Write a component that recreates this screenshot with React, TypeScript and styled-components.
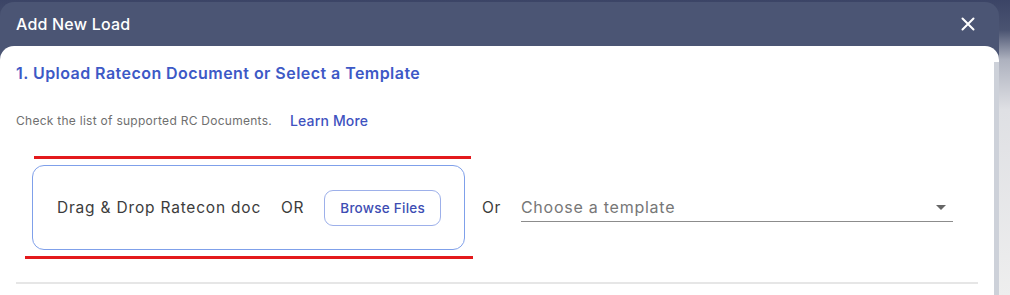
import styled, { createGlobalStyle } from "styled-components";

const GlobalStyle = createGlobalStyle`
  html, body {
    margin: 0;
    padding: 0;
  }
  body {
    font-family: "Inter", "Open Sans", sans-serif;
  }
`;

const Page = styled.div`
  width: 1010px;
  height: 295px;
  overflow: hidden;
  display: flex;
  flex-direction: row;
  background: linear-gradient(
    180deg,
    #3b4466 0px,
    #4a5371 30px,
    #aeb2bf 60px,
    #dfe0e4 110px,
    #eeeeee 295px
  );
`;

const Modal = styled.div`
  width: 999px;
  margin-top: 2px;
  display: flex;
  flex-direction: column;
  background: #4b5574;
  border-radius: 14px 14px 0 0;
`;

const Header = styled.div`
  height: 44px;
  padding: 0 24px 0 16px;
  display: flex;
  align-items: center;
  justify-content: space-between;
  color: #ffffff;

  h2 {
    margin: 0;
    font-size: 16px;
    font-weight: 500;
    letter-spacing: 0.2px;
  }
`;

const CloseButton = styled.button`
  background: none;
  border: none;
  padding: 0;
  width: 14px;
  height: 14px;
  display: flex;
  cursor: pointer;
`;

const Body = styled.div`
  flex: 1;
  display: flex;
  flex-direction: row;
  background: #ffffff;
  border-radius: 14px 14px 0 0;
`;

const Content = styled.div`
  flex: 1;
  padding: 17px 16px 0 16px;
  display: flex;
  flex-direction: column;
`;

const ScrollTrack = styled.div`
  width: 5px;
  margin-top: 16px;
  background: #cdd1d9;
`;

const SectionTitle = styled.h3`
  margin: 0;
  font-size: 16px;
  line-height: 20px;
  font-weight: 600;
  letter-spacing: 0.45px;
  color: #3d59c6;
`;

const HintRow = styled.div`
  margin-top: 27px;
  display: flex;
  align-items: center;
  gap: 18px;
  height: 20px;
`;

const Hint = styled.span`
  font-size: 12px;
  letter-spacing: 0.27px;
  color: #6f6f6f;
`;

const LearnMore = styled.a`
  font-size: 14px;
  font-weight: 500;
  letter-spacing: 0.15px;
  color: #3f52c0;
  text-decoration: none;
  cursor: pointer;
`;

const UploadRow = styled.div`
  margin-top: 26px;
  display: flex;
  flex-direction: row;
  align-items: center;
`;

const Highlight = styled.div`
  display: flex;
  flex-direction: column;
  width: 457px;
`;

const RedMark = styled.div<{ $left: number; $width: number }>`
  height: 3px;
  margin-left: ${(p) => p.$left}px;
  width: ${(p) => p.$width}px;
  background: #e3191c;
`;

const DropZone = styled.div`
  margin: 6px 0 6px 16px;
  width: 433px;
  height: 85px;
  box-sizing: border-box;
  border: 1px solid #7fa0ea;
  border-radius: 12px;
  display: flex;
  align-items: center;
  padding-left: 24px;
  color: #3c3c3c;
  font-size: 15.5px;
  letter-spacing: 0.8px;
`;

const OrText = styled.span<{ $left: number; $right: number }>`
  margin: 0 ${(p) => p.$right}px 0 ${(p) => p.$left}px;
  font-size: 15.5px;
  letter-spacing: 0.6px;
  color: #3c3c3c;
`;

const BrowseButton = styled.button`
  width: 117px;
  height: 36px;
  border: 1px solid #9db0ea;
  border-radius: 9px;
  background: #ffffff;
  color: #3d4db3;
  font-family: inherit;
  font-size: 13.5px;
  font-weight: 500;
  letter-spacing: 0.25px;
  cursor: pointer;
`;

const Select = styled.div`
  width: 432px;
  height: 29px;
  box-sizing: border-box;
  border-bottom: 1px solid #8c8c8c;
  display: flex;
  align-items: center;
  justify-content: space-between;
  padding: 0 7px 0 0;
  font-size: 16px;
  letter-spacing: 0.75px;
  color: #777777;
`;

const Caret = styled.span`
  width: 0;
  height: 0;
  border-left: 5px solid transparent;
  border-right: 5px solid transparent;
  border-top: 5px solid #666666;
`;

const Divider = styled.div`
  margin-top: 23px;
  height: 2px;
  background: #e6e6e6;
`;

export default function App() {
  return (
    <Page>
      <GlobalStyle />
      <Modal>
        <Header>
          <h2>Add New Load</h2>
          <CloseButton aria-label="close">
            <svg width="14" height="14" viewBox="0 0 14 14">
              <path
                d="M1.5 1.5 L12.5 12.5 M12.5 1.5 L1.5 12.5"
                stroke="#ffffff"
                strokeWidth="2"
                strokeLinecap="round"
              />
            </svg>
          </CloseButton>
        </Header>
        <Body>
          <Content>
            <SectionTitle>1. Upload Ratecon Document or Select a Template</SectionTitle>
            <HintRow>
              <Hint>Check the list of supported RC Documents.</Hint>
              <LearnMore>Learn More</LearnMore>
            </HintRow>
            <UploadRow>
              <Highlight>
                <RedMark $left={18} $width={437} />
                <DropZone>
                  Drag &amp; Drop Ratecon doc
                  <OrText $left={20} $right={20}>OR</OrText>
                  <BrowseButton>Browse Files</BrowseButton>
                </DropZone>
                <RedMark $left={9} $width={448} />
              </Highlight>
              <OrText $left={9} $right={20}>Or</OrText>
              <Select>
                Choose a template
                <Caret />
              </Select>
            </UploadRow>
            <Divider />
          </Content>
          <ScrollTrack />
        </Body>
      </Modal>
    </Page>
  );
}
